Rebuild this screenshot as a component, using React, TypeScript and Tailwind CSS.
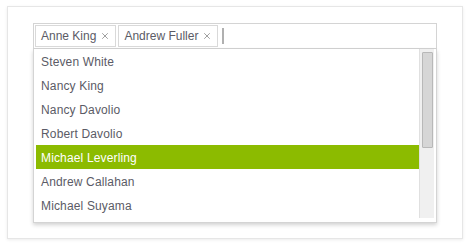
import { X } from 'lucide-react'

const people = [
  'Steven White',
  'Nancy King',
  'Nancy Davolio',
  'Robert Davolio',
  'Michael Leverling',
  'Andrew Callahan',
  'Michael Suyama',
]

const tags = ['Anne King', 'Andrew Fuller']

export default function App() {
  return (
    <div className="h-[247px] w-[470px] bg-white pl-[7px] pt-[6px] font-['Liberation_Sans',Arial,sans-serif] text-[12px] text-[#5b5b66]">
      <div className="h-[233px] w-[456px] border border-[#e6e6e6] bg-white pl-[25px] pt-[16px] shadow-[0_1px_3px_rgba(0,0,0,0.08)]">
        {/* Multi-select input */}
        <div className="flex h-[26px] w-[404px] items-center gap-[2px] border border-[#d4d4d4] bg-white pl-[1px]">
          {tags.map((t) => (
            <div
              key={t}
              className="flex h-[22px] items-center border border-[#d9d9d9] bg-white pl-[5px] pr-[5px]"
            >
              <span>{t}</span>
              <X className="ml-[4px] h-[10px] w-[10px] text-[#666]" strokeWidth={1.5} />
            </div>
          ))}
          <div className="ml-[2px] h-[16px] w-[2px] bg-[#b0b0b0]" />
        </div>

        {/* Dropdown */}
        <div className="flex h-[174px] w-[404px] border border-t-0 border-[#d4d4d4] bg-white p-[2px] pt-0 shadow-[0_2px_4px_rgba(0,0,0,0.18)]">
          <ul className="flex-1 tracking-[0.15px]">
            {people.map((p, i) => (
              <li
                key={p}
                className={
                  i === 4
                    ? 'flex h-[24px] items-center bg-[#8cbb00] pl-[5px] pt-[1px] text-white'
                    : 'flex h-[24px] items-center pl-[5px] pt-[1px]'
                }
              >
                {p}
              </li>
            ))}
          </ul>
          <div className="flex h-[169px] w-[15px] justify-center border-l border-[#e0e0e0] bg-[#f0f0f0] pt-[3px]">
            <div className="h-[96px] w-[11px] rounded-[1px] border border-[#b8b8b8] bg-[#d6d6d6]" />
          </div>
        </div>
      </div>
    </div>
  )
}
